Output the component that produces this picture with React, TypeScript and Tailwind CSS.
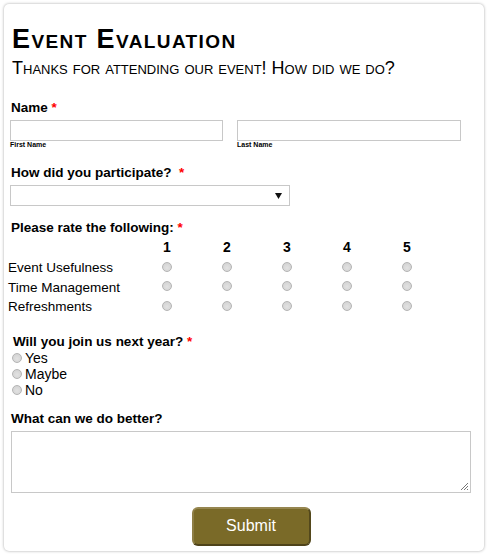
import React from "react";

function Star() {
  return <span className="text-[#ff0000]">*</span>;
}

function Radio() {
  return (
    <span className="inline-block h-[10px] w-[10px] shrink-0 rounded-full border border-[#b4b4b4] bg-[radial-gradient(circle_at_50%_60%,#e2e2e2,#cfcfcf)]" />
  );
}

const rows = ["Event Usefulness", "Time Management", "Refreshments"];
const scale = [1, 2, 3, 4, 5];

export default function App() {
  return (
    <div className="bg-white p-1 font-['Liberation_Sans',Arial,sans-serif] text-black">
      <div className="h-[547px] w-[480px] rounded-[5px] bg-white px-[4px] pt-[20px] shadow-[0_0_3px_rgba(0,0,0,0.35)]">
        <h1 className="pl-[4px] text-[27px] font-bold leading-[30px] tracking-[1.4px] [font-variant:small-caps]">
          Event Evaluation
        </h1>
        <p className="mt-[4px] pl-[4px] text-[18px] leading-[20px] [font-variant:small-caps]">
          Thanks for attending our event! How did we do?
        </p>

        <div className="mt-[22px] pl-[3px] text-[13.5px] font-bold leading-[16px]">
          Name <Star />
        </div>
        <div className="mt-[4px] flex gap-[14px] pl-[2px]">
          <div className="w-[213px]">
            <div className="h-[21px] border border-[#c8c8c8]" />
            <div className="text-[7px] font-bold leading-[8px]">First Name</div>
          </div>
          <div className="w-[224px]">
            <div className="h-[21px] border border-[#c8c8c8]" />
            <div className="text-[7px] font-bold leading-[8px]">Last Name</div>
          </div>
        </div>

        <div className="mt-[16px] pl-[3px] text-[13.5px] font-bold leading-[16px]">
          How did you participate?&nbsp; <Star />
        </div>
        <div className="ml-[2px] mt-[4px] flex h-[21px] w-[280px] items-center justify-end border border-[#c8c8c8] pr-[7px]">
          <svg width="7" height="6" viewBox="0 0 7 6">
            <path d="M0 0h7L3.5 6z" fill="#111" />
          </svg>
        </div>

        <div className="mt-[14px] pl-[3px] text-[13.5px] font-bold leading-[16px]">
          Please rate the following: <Star />
        </div>
        <div className="mt-[3px] grid grid-cols-[129px_repeat(5,60px)]">
          <div />
          {scale.map((n) => (
            <div key={n} className="text-center text-[14px] font-bold leading-[16px]">
              {n}
            </div>
          ))}
        </div>
        <div className="mt-[3px]">
          {rows.map((r) => (
            <div key={r} className="grid h-[19.5px] grid-cols-[129px_repeat(5,60px)] items-center">
              <div className="text-[13.5px] leading-[19.5px]">{r}</div>
              {scale.map((n) => (
                <div key={n} className="flex justify-center pb-[2px]">
                  <Radio />
                </div>
              ))}
            </div>
          ))}
        </div>

        <div className="mt-[17px] pl-[5px] text-[13.5px] font-bold leading-[16px]">
          Will you join us next year? <Star />
        </div>
        <div className="pl-[4px]">
          {["Yes", "Maybe", "No"].map((o) => (
            <div key={o} className="flex h-[16px] items-center gap-[3px] text-[14px] leading-[16px]">
              <Radio />
              <span>{o}</span>
            </div>
          ))}
        </div>

        <div className="mt-[13px] pl-[3px] text-[13.5px] font-bold leading-[16px]">What can we do better?</div>
        <div className="relative ml-[3px] mt-[4px] h-[62px] w-[460px] border border-[#c8c8c8]">
          <svg className="absolute bottom-[1px] right-[1px]" width="9" height="9" viewBox="0 0 9 9">
            <path d="M8 1L1 8M8 4L4 8M8 7L7 8" stroke="#777" strokeWidth="1" />
          </svg>
        </div>

        <div className="mt-[14px] flex justify-center pl-[14px]">
          <button className="h-[39px] w-[119px] rounded-[6px] border-[2px] border-t-[#968650] border-l-[#8e7e45] border-r-[#53481c] border-b-[#4e431a] bg-[#7a6a28] text-[16px] text-white">
            Submit
          </button>
        </div>
      </div>
    </div>
  );
}
